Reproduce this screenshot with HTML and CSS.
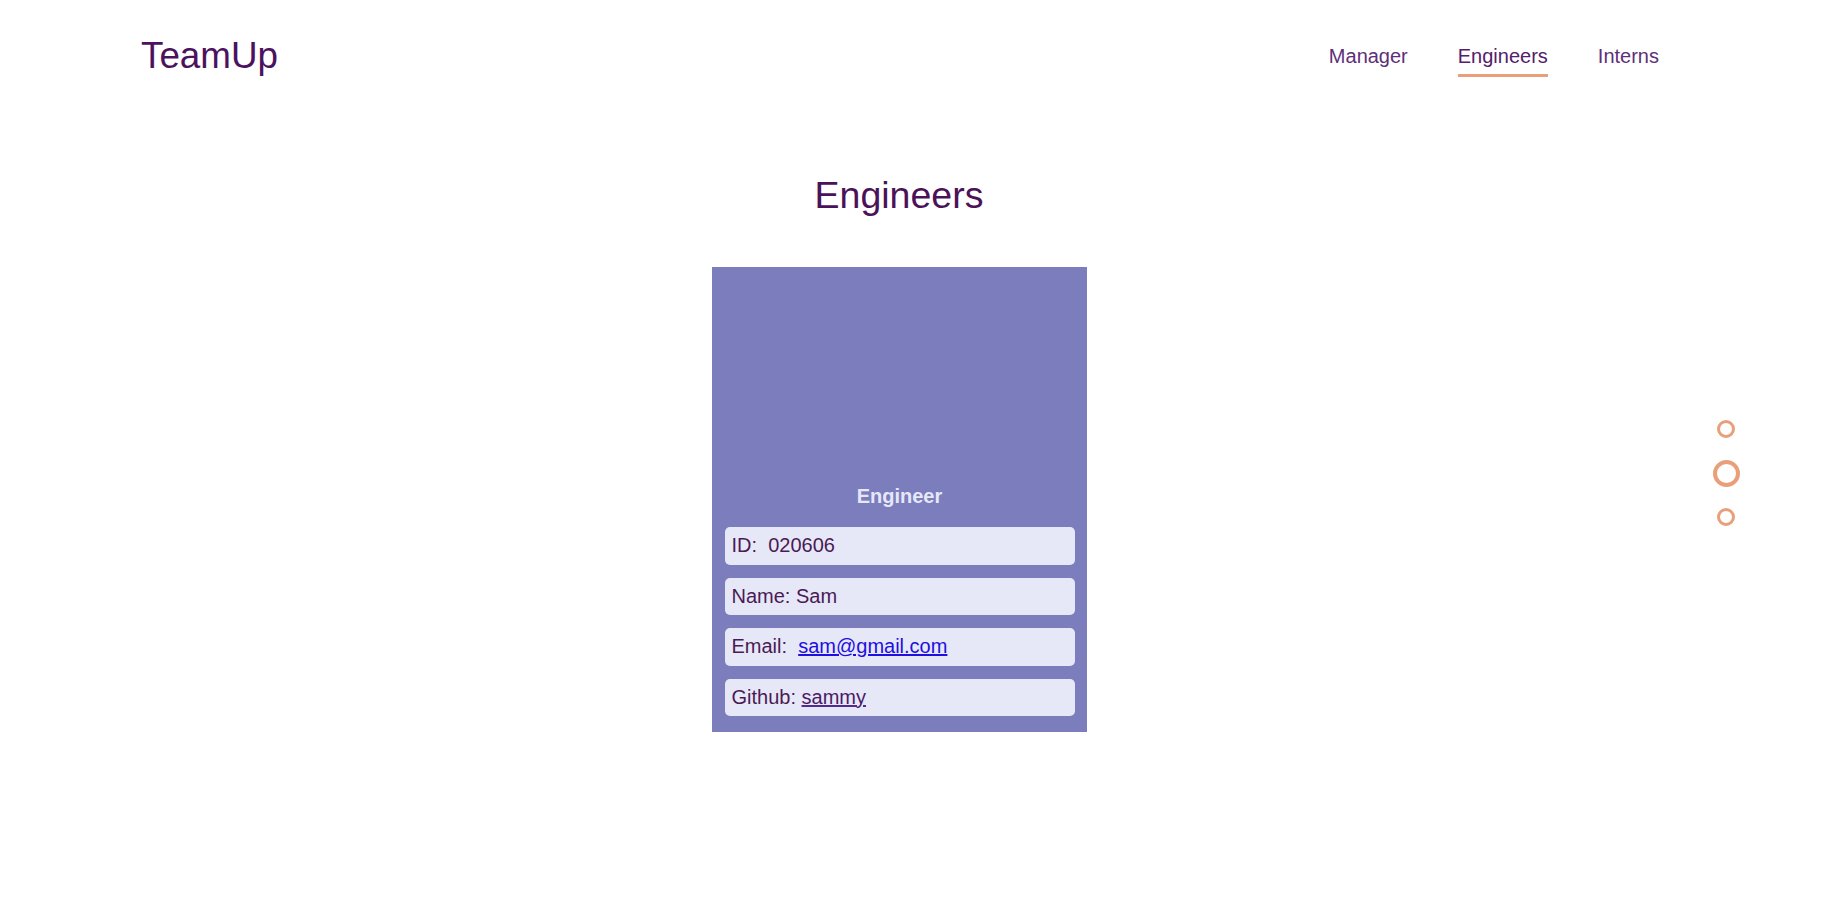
FILE: index.html
```html
<!DOCTYPE html>
<html lang="en">
<head>
<meta charset="utf-8">
<title>TeamUp</title>
<link rel="stylesheet" href="styles.css">
</head>
<body>
<div class="page">
  <header class="header">
    <div class="logo">TeamUp</div>
    <nav class="nav">
      <a class="nav-link" href="#">Manager</a>
      <a class="nav-link active" href="#">Engineers</a>
      <a class="nav-link" href="#">Interns</a>
    </nav>
  </header>
  <main class="main">
    <h1 class="title">Engineers</h1>
    <div class="card">
      <div class="card-top"></div>
      <div class="card-role">Engineer</div>
      <div class="row">ID:&nbsp; 020606</div>
      <div class="row">Name: Sam</div>
      <div class="row">Email:&nbsp; <a class="email" href="#">sam@gmail.com</a></div>
      <div class="row">Github: <a class="gh" href="#">sammy</a></div>
    </div>
  </main>
</div>
<div class="dots">
  <span class="dot"></span>
  <span class="dot big"></span>
  <span class="dot"></span>
</div>
</body>
</html>
```
FILE: styles.css
```css
html, body {
  margin: 0;
  padding: 0;
  background: #ffffff;
}
body {
  font-family: "Liberation Sans", Arial, sans-serif;
  color: #4b1257;
}
.page {
  width: 1800px;
}
.header {
  display: flex;
  justify-content: space-between;
  align-items: flex-start;
  padding: 36px 141px 0 141px;
}
.logo {
  font-size: 36.8px;
  line-height: 40px;
  color: #4b1260;
}
.nav {
  display: flex;
  gap: 50px;
  padding-top: 9px;
}
.nav-link {
  font-size: 20px;
  line-height: 23px;
  color: #5e2f78;
  text-decoration: none;
  padding-bottom: 6px;
  border-bottom: 3px solid transparent;
}
.nav-link.active {
  color: #54206b;
  border-bottom-color: #e9a07a;
}
.main {
  display: flex;
  flex-direction: column;
  align-items: center;
  padding-right: 2px;
}
.title {
  margin: 97px 0 50px;
  font-size: 37.5px;
  font-weight: normal;
  line-height: 43px;
  color: #4b1259;
}
.card {
  width: 375px;
  box-sizing: border-box;
  background: #7b7dbc;
  padding: 0 12px 16px 13px;
  display: flex;
  flex-direction: column;
  gap: 13px;
}
.card-top {
  height: 218px;
  margin-bottom: -13px;
}
.card-role {
  text-align: center;
  font-weight: bold;
  font-size: 20px;
  line-height: 23px;
  color: #e6e7f8;
  margin-bottom: 6px;
}
.row {
  background: #e6e8f8;
  border-radius: 5px;
  padding: 7px 7px 7.5px;
  font-size: 20px;
  line-height: 23px;
  color: #4b1a55;
}
.email {
  color: #1f0fe0;
}
.gh {
  color: #4b1a66;
  text-decoration-color: #552a90;
}
.dots {
  position: fixed;
  right: 104px;
  top: 420px;
  width: 18px;
  display: flex;
  flex-direction: column;
  align-items: center;
  gap: 26px;
}
.dot {
  display: block;
  width: 18px;
  height: 18px;
  box-sizing: border-box;
  border: 3px solid #e9a07a;
  border-radius: 50%;
}
.dot.big {
  width: 27px;
  height: 27px;
  border-width: 4.5px;
  margin: -4.5px 0;
}
```
